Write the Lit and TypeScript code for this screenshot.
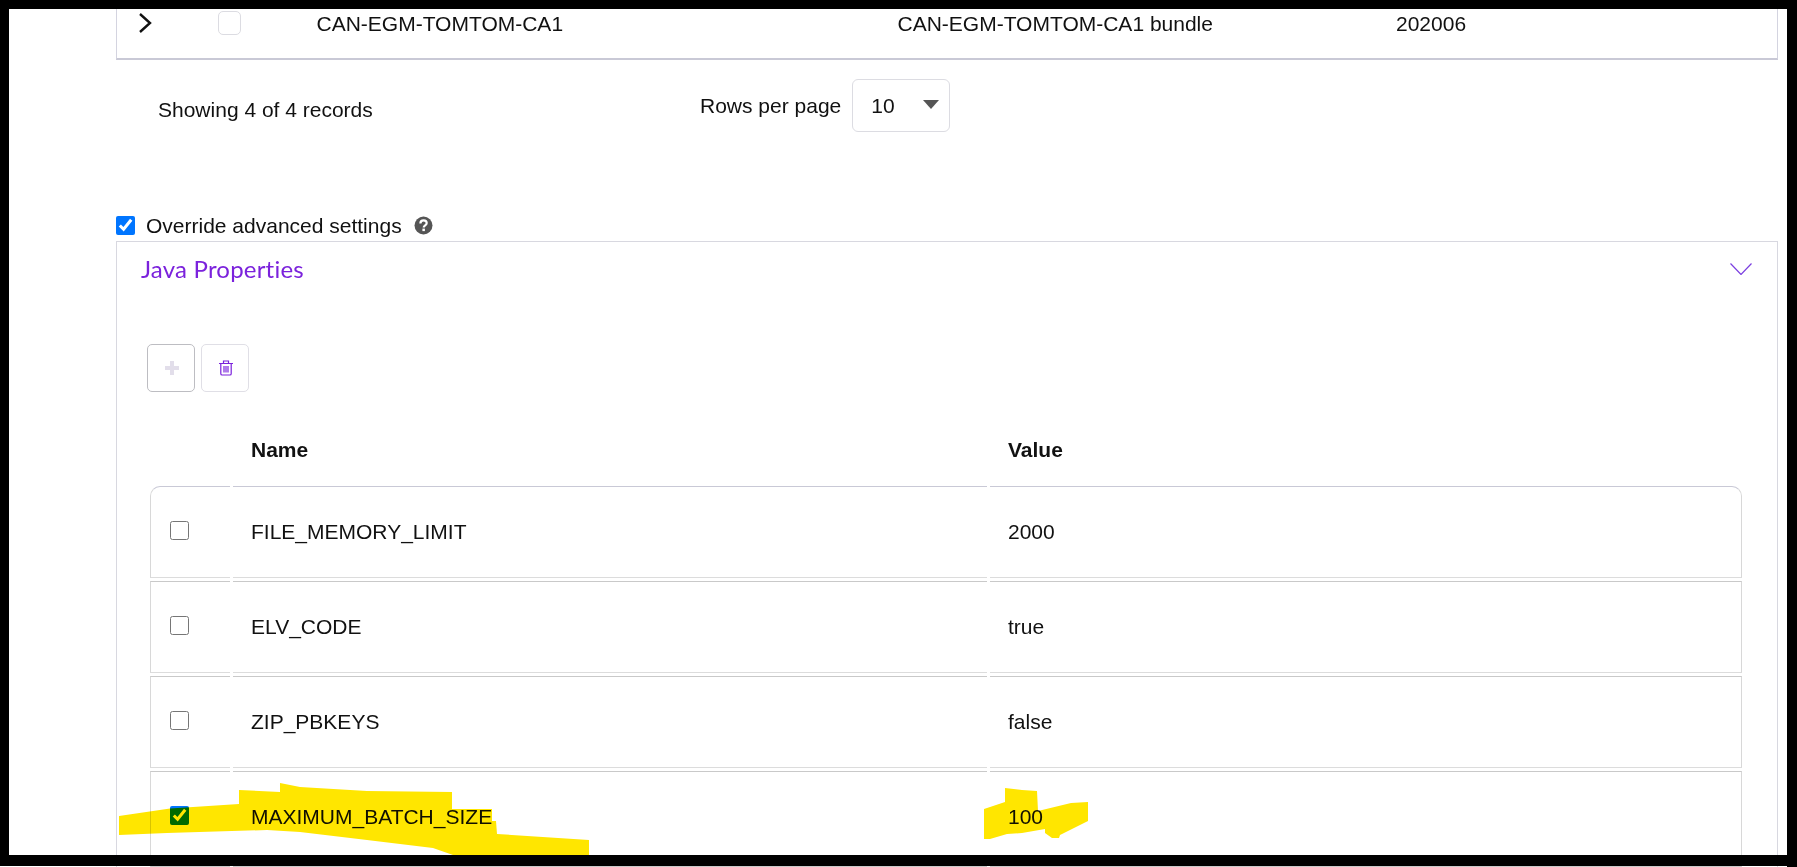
import { LitElement, html, css, svg } from "lit";
import { customElement } from "lit/decorators.js";

const rows = [
  { name: "FILE_MEMORY_LIMIT", value: "2000", on: false },
  { name: "ELV_CODE", value: "true", on: false },
  { name: "ZIP_PBKEYS", value: "false", on: false },
  { name: "MAXIMUM_BATCH_SIZE", value: "100", on: true },
];

const marks = [
  "119,816 170,808.5 239,804 239,790 280,792 280,783 300,787 367,791 452,792 452,809 492,809 492,821 496,821 497,834 589,840 589,855 453,855 433,848 367,840 300,832 267,830 167,833 119,835",
  "984,809 1005,802 1005,788 1022,790 1037,791 1038,811 1071,803 1088,802 1088,821 1060,835 1059,838 1052,838 1045,833 1045,829 1022,833 1007,834 990,839 984,839",
];

@customElement("app-root")
export class AppRoot extends LitElement {
  static styles = css`
    :host {
      display: block;
      position: relative;
      width: 1797px;
      height: 867px;
      overflow: hidden;
      background: #fff;
      color: #111;
      font-family: "Liberation Sans", Arial, sans-serif;
      font-size: 21px;
    }
    .page {
      padding: 0 19px 0 116px;
    }
    .card {
      height: 60px;
      box-sizing: border-box;
      border: 1px solid #d4d4e0;
      border-top: 0;
      border-bottom: 2px solid #c9c9d6;
      display: flex;
      align-items: flex-start;
    }
    .chev {
      width: 14px;
      height: 20px;
      margin: 13px 0 0 21px;
      flex: none;
    }
    .blank {
      width: 23px;
      height: 24px;
      box-sizing: border-box;
      border: 1px solid #dcdce2;
      border-radius: 5px;
      margin: 11px 0 0 66px;
      flex: none;
    }
    .c1,
    .c2,
    .c3 {
      line-height: 22px;
      margin-top: 13px;
      flex: none;
    }
    .c1 {
      width: 581px;
      margin-left: 75.5px;
    }
    .c2 {
      width: 498.5px;
    }
    .pager {
      display: flex;
      height: 91px;
      align-items: center;
    }
    .count {
      margin: 9px 0 0 42px;
      width: 542px;
    }
    .rpp {
      margin-right: 11px;
    }
    .select {
      width: 98px;
      height: 53px;
      box-sizing: border-box;
      border: 1px solid #dcdce2;
      border-radius: 6px;
      display: flex;
      align-items: center;
      justify-content: space-between;
      padding: 0 10px 0 18px;
    }
    .caret {
      width: 0;
      height: 0;
      border-left: 8px solid transparent;
      border-right: 8px solid transparent;
      border-top: 9px solid #555;
      margin-bottom: 3px;
    }
    .override {
      display: flex;
      align-items: center;
      margin: 62px 0 3px;
      height: 25px;
    }
    .override input,
    .cell input {
      width: 19px;
      height: 19px;
      margin: 0;
      flex: none;
    }
    .override span {
      margin: 0 12px 0 11px;
    }
    .help {
      width: 19px;
      height: 19px;
    }
    .panel {
      border: 1px solid #d8d8e0;
      height: 640px;
    }
    .head {
      height: 53px;
      display: flex;
      align-items: center;
      justify-content: space-between;
      padding: 0 25px 0 24px;
    }
    .title {
      font-family: Lato, sans-serif;
      font-size: 24px;
      letter-spacing: 0.2px;
      color: #7b22dc;
    }
    .down {
      width: 22px;
      height: 12px;
    }
    .tools {
      display: flex;
      gap: 6px;
      margin: 49px 0 0 30px;
    }
    .tool {
      width: 48px;
      height: 48px;
      box-sizing: border-box;
      border: 1px solid #e0dfe6;
      border-radius: 5px;
      display: flex;
      align-items: center;
      justify-content: center;
    }
    .tool.add {
      border-color: #bdbdc2;
    }
    .tool svg {
      width: 16px;
      height: 16px;
      margin-left: 2px;
    }
    .table {
      margin: 0 34px 0 33px;
    }
    .grid {
      display: grid;
      grid-template-columns: 80px 754px 752px;
      gap: 3px;
    }
    .th {
      height: 94px;
      box-sizing: border-box;
      display: flex;
      align-items: center;
      font-weight: 700;
      padding: 22px 0 0 18px;
    }
    .list {
      display: flex;
      flex-direction: column;
      gap: 3px;
    }
    .cell {
      height: 92px;
      box-sizing: border-box;
      border-top: 1px solid #c9c9c9;
      border-bottom: 1px solid #dcdcdc;
      display: flex;
      align-items: center;
      padding-left: 18px;
    }
    .cell.first {
      border-left: 1px solid #d8d8d8;
      padding-left: 19px;
    }
    .cell.first input {
      margin-bottom: 3px;
    }
    .cell.last {
      border-right: 1px solid #d8d8d8;
    }
    .top .cell {
      border-top-color: #c9c9d6;
    }
    .top .cell.first {
      border-top-left-radius: 10px;
    }
    .top .cell.last {
      border-top-right-radius: 10px;
    }
    .frame {
      position: absolute;
      left: 0;
      top: 0;
      width: 1797px;
      height: 866px;
      box-sizing: border-box;
      border: solid #000;
      border-width: 9px 10px 11px 9px;
      pointer-events: none;
    }
    .frame::after {
      content: "";
      position: absolute;
      right: -10px;
      bottom: -12px;
      width: 10px;
      height: 1px;
      background: #000;
    }
    .ink {
      position: absolute;
      left: 0;
      top: 0;
      width: 1797px;
      height: 867px;
      mix-blend-mode: multiply;
      pointer-events: none;
    }
  `;

  private row(r: { name: string; value: string; on: boolean }, top: boolean) {
    return html`<div class="grid ${top ? "top" : ""}">
      <div class="cell first">
        <input type="checkbox" .checked=${r.on} />
      </div>
      <div class="cell">${r.name}</div>
      <div class="cell last">${r.value}</div>
    </div>`;
  }

  render() {
    return html`
      <div class="page">
        <div class="card">
          <svg class="chev" viewBox="0 0 14 20">
            <path d="M2 1l10 9-10 9" fill="none" stroke="#111" stroke-width="2.4" />
          </svg>
          <span class="blank"></span>
          <span class="c1">CAN-EGM-TOMTOM-CA1</span>
          <span class="c2">CAN-EGM-TOMTOM-CA1 bundle</span>
          <span class="c3">202006</span>
        </div>
        <div class="pager">
          <span class="count">Showing 4 of 4 records</span>
          <span class="rpp">Rows per page</span>
          <div class="select"><span>10</span><span class="caret"></span></div>
        </div>
        <label class="override">
          <input type="checkbox" checked />
          <span>Override advanced settings</span>
          <svg class="help" viewBox="0 0 19 19">
            <circle cx="9.5" cy="9.5" r="9" fill="#555" />
            <path d="M6.4 7.4c0-1.9 1.4-3 3.2-3s3.1 1.1 3.1 2.7c0 2.3-3 2.2-3 4.3" fill="none" stroke="#fff" stroke-width="2.2" />
            <rect x="8.4" y="12.6" width="2.5" height="2.5" fill="#fff" />
          </svg>
        </label>
        <section class="panel">
          <div class="head">
            <span class="title">Java Properties</span>
            <svg class="down" viewBox="0 0 22 12">
              <path d="M.5.5L11 11.5 21.5.5" fill="none" stroke="#7b3fe0" stroke-width="1.2" />
            </svg>
          </div>
          <div class="tools">
            <div class="tool add">
              <svg viewBox="0 0 16 16"><path d="M6 1h4v5h5v4h-5v5H6v-5H1V6h5z" fill="#e2deea" /></svg>
            </div>
            <div class="tool">
              <svg viewBox="0 0 16 16" fill="none" stroke="#7b22dc" stroke-width="1.2">
                <path d="M1 3.5h14M5.5 3.5V1h5v2.5M2.8 3.5v10.2q0 1.3 1.3 1.3h7.8q1.3 0 1.3-1.3V3.5" />
                <path d="M6 6v6.5M8 6v6.5M10 6v6.5" />
              </svg>
            </div>
          </div>
          <div class="table">
            <div class="grid">
              <div></div>
              <div class="th">Name</div>
              <div class="th">Value</div>
            </div>
            <div class="list">
              ${rows.map((r, i) => this.row(r, i === 0))}
              ${this.row({ name: "", value: "", on: false }, false)}
            </div>
          </div>
        </section>
      </div>
      <svg class="ink" viewBox="0 0 1797 867">
        ${marks.map((p) => svg`<polygon points=${p} fill="#ffe600" />`)}
      </svg>
      <div class="frame"></div>
    `;
  }
}
